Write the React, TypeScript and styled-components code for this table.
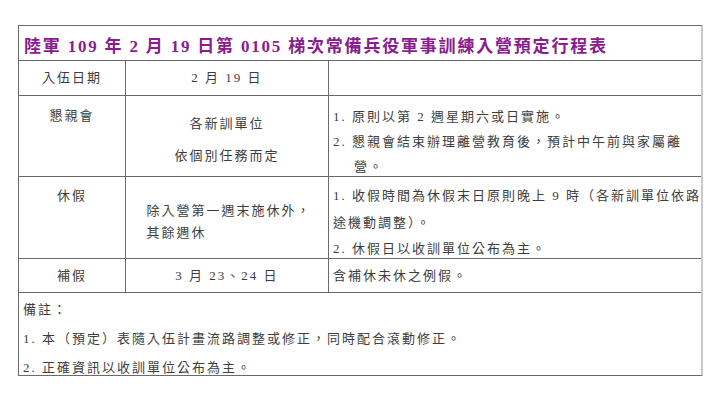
import styled, { createGlobalStyle } from "styled-components";

const GlobalStyle = createGlobalStyle`
  html, body {
    margin: 0;
    padding: 0;
    background: #ffffff;
  }
  body {
    font-family: "Liberation Serif", "Noto Sans CJK TC", serif;
  }
`;

const Page = styled.div`
  width: 715px;
  height: 416px;
  box-sizing: border-box;
  padding: 25px 12px 0 18px;
  background: #fff;
`;

const Sheet = styled.div`
  display: grid;
  grid-template-columns: 107px 203px 1fr;
  grid-template-rows: 35px 35px 81px 82px 34px 82px;
  width: 685px;
  box-sizing: border-box;
  border-top: 1px solid #6a6a6a;
  border-left: 1px solid #6a6a6a;
  border-bottom: 1px solid #6a6a6a;
  border-right: 2px solid #c9c9c9;
  color: #3d3d3d;
  font-size: 13px;
  letter-spacing: 2px;
`;

const TitleCell = styled.div`
  grid-column: 1 / 4;
  display: flex;
  align-items: center;
  padding: 3px 0 0 5px;
  box-sizing: border-box;
  border-bottom: 1px solid #6a6a6a;
  color: #8a1c8f;
  font-size: 17px;
  font-weight: 700;
  letter-spacing: 1.8px;
  white-space: nowrap;
`;

const Cell = styled.div<{ $center?: boolean; $middle?: boolean; $pad?: number; $lh?: number; $last?: boolean }>`
  display: flex;
  flex-direction: column;
  justify-content: ${(p) => (p.$middle ? "center" : "flex-start")};
  align-items: ${(p) => (p.$center ? "center" : "flex-start")};
  box-sizing: border-box;
  padding: ${(p) => (p.$middle ? 0 : p.$pad ?? 6)}px ${(p) => (p.$center ? 0 : 4)}px 0;
  line-height: ${(p) => p.$lh ?? 26}px;
  border-bottom: 1px solid #6a6a6a;
  border-right: ${(p) => (p.$last ? "none" : "1px solid #6a6a6a")};
  white-space: nowrap;
  overflow: hidden;
`;

const Block = styled.div`
  text-align: left;
  padding-left: 4px;
`;

const Line = styled.div<{ $indent?: boolean }>`
  padding-left: ${(p) => (p.$indent ? 21 : 0)}px;
`;

const NoteCell = styled.div`
  grid-column: 1 / 4;
  box-sizing: border-box;
  padding: 2px 0 0 4px;
  line-height: 29px;
  white-space: nowrap;
`;

export default function App() {
  return (
    <Page>
      <GlobalStyle />
      <Sheet>
        <TitleCell>陸軍 109 年 2 月 19 日第 0105 梯次常備兵役軍事訓練入營預定行程表</TitleCell>

        <Cell $center $middle>入伍日期</Cell>
        <Cell $center $middle>2 月 19 日</Cell>
        <Cell $middle $last />

        <Cell $center $pad={7}>懇親會</Cell>
        <Cell $center $pad={12} $lh={32}>
          <Line>各新訓單位</Line>
          <Line>依個別任務而定</Line>
        </Cell>
        <Cell $pad={8} $lh={25} $last>
          <Line>1. 原則以第 2 週星期六或日實施。</Line>
          <Line>2. 懇親會結束辦理離營教育後，預計中午前與家屬離</Line>
          <Line $indent>營。</Line>
        </Cell>

        <Cell $center $pad={6}>休假</Cell>
        <Cell $center $pad={23} $lh={22}>
          <Block>
            <Line>除入營第一週末施休外，</Line>
            <Line>其餘週休</Line>
          </Block>
        </Cell>
        <Cell $pad={6} $lh={26.5} $last>
          <Line>1. 收假時間為休假末日原則晚上 9 時（各新訓單位依路</Line>
          <Line>途機動調整）。</Line>
          <Line>2. 休假日以收訓單位公布為主。</Line>
        </Cell>

        <Cell $center $middle>補假</Cell>
        <Cell $center $middle>3 月 23、24 日</Cell>
        <Cell $middle $last>含補休未休之例假。</Cell>

        <NoteCell>
          <Line>備註：</Line>
          <Line>1. 本（預定）表隨入伍計畫流路調整或修正，同時配合滾動修正。</Line>
          <Line>2. 正確資訊以收訓單位公布為主。</Line>
        </NoteCell>
      </Sheet>
    </Page>
  );
}
